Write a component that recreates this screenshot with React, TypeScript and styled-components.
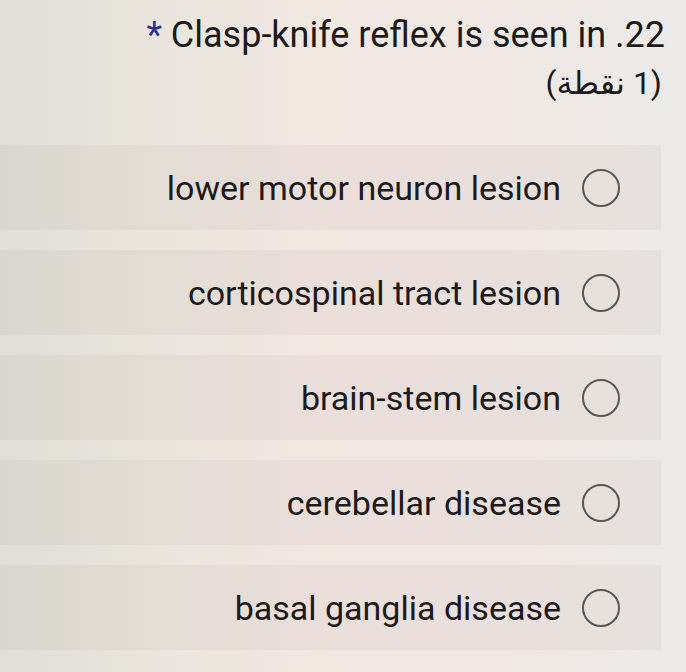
import React from "react";
import styled, { createGlobalStyle } from "styled-components";

const GlobalStyle = createGlobalStyle`
  html, body {
    margin: 0;
    padding: 0;
    width: 686px;
    height: 672px;
    overflow: hidden;
  }
  body {
    font-family: Roboto, "Noto Sans", "DejaVu Sans", sans-serif;
  }
`;

const Page = styled.div`
  width: 686px;
  height: 672px;
  box-sizing: border-box;
  background:
    linear-gradient(90deg, #dfdfd7 0%, #e9e5dd 22%, #f2e8e2 48%, #f0e8e4 75%, #ecebe9 100%);
  display: flex;
  flex-direction: column;
  color: #1c1a1a;
`;

const Header = styled.header`
  display: flex;
  flex-direction: column;
  align-items: flex-end;
  padding: 10px 21px 0 0;
  height: 135px;
  box-sizing: border-box;
`;

const Title = styled.div`
  font-size: 36px;
  line-height: 50px;
`;

const Star = styled.span`
  color: #2b2f9c;
`;

const Points = styled.div`
  font-size: 32px;
  line-height: 46px;
  padding-right: 3px;
  font-family: Roboto, "DejaVu Sans", "Noto Sans", sans-serif;
`;

const Options = styled.div`
  display: flex;
  flex-direction: column;
  gap: 20px;
  margin-right: 25px;
  padding-top: 10px;
`;

const Option = styled.label`
  height: 85px;
  display: flex;
  align-items: center;
  justify-content: flex-end;
  gap: 21px;
  padding-right: 41px;
  background: rgba(150, 125, 115, 0.075);
  font-size: 34px;
`;

const Radio = styled.span`
  width: 38px;
  height: 38px;
  box-sizing: border-box;
  border: 2px solid #5a5656;
  border-radius: 50%;
  flex: none;
`;

const options = [
  "lower motor neuron lesion",
  "corticospinal tract lesion",
  "brain-stem lesion",
  "cerebellar disease",
  "basal ganglia disease",
];

export default function App() {
  return (
    <Page>
      <GlobalStyle />
      <Header>
        <Title>
          <Star>*</Star> Clasp-knife reflex is seen in .22
        </Title>
        <Points>
          <span dir="rtl">(1 نقطة)</span>
        </Points>
      </Header>
      <Options>
        {options.map((o) => (
          <Option key={o}>
            <span>{o}</span>
            <Radio />
          </Option>
        ))}
      </Options>
    </Page>
  );
}
